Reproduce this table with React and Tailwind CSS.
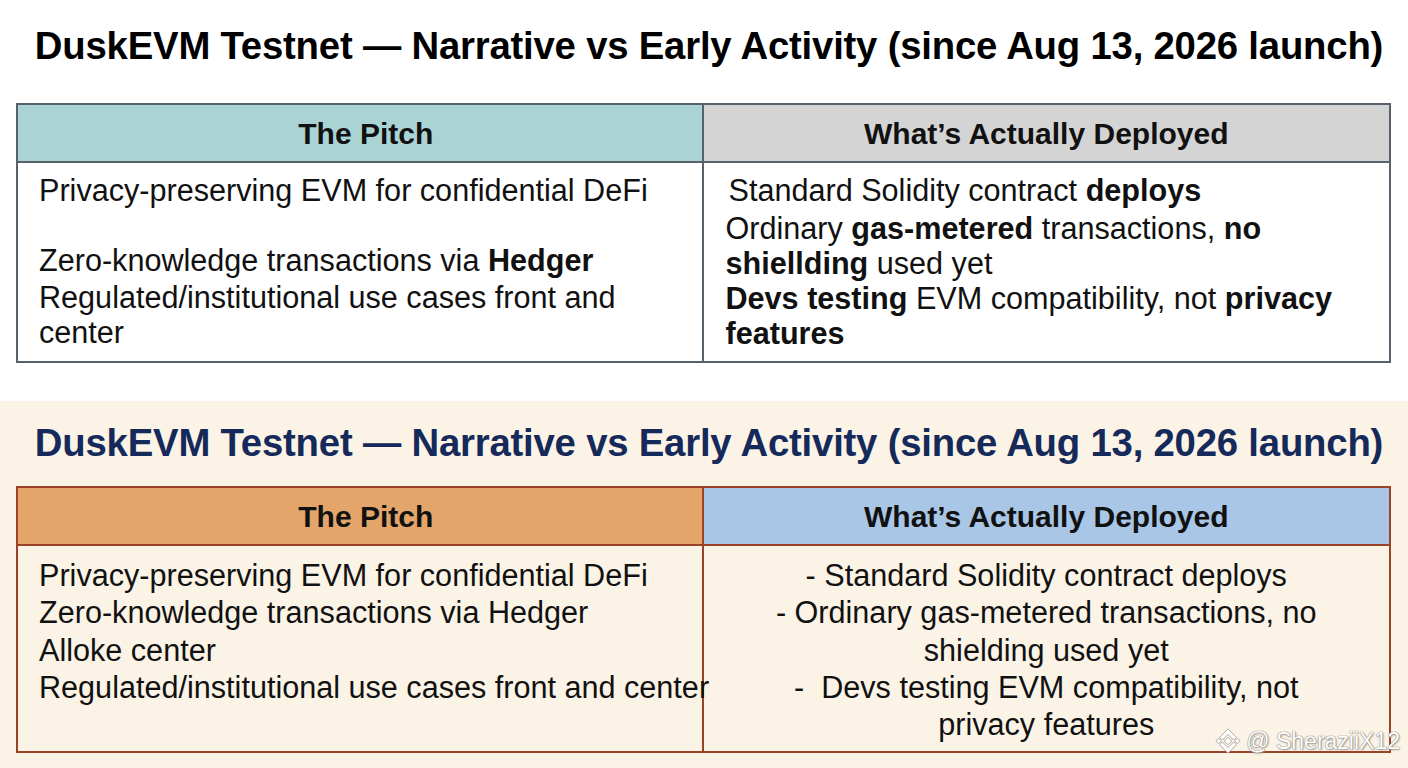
import React from "react";

// colours picked from the two comparison panels
const font = { fontFamily: '"Liberation Sans", Arial, sans-serif' };

function BinanceMark() {
  return (
    <svg viewBox="0 0 32 32" className="w-[30px] h-[30px]">
      <g fill="#ffffff" stroke="#a9a39b" strokeWidth="1" strokeLinejoin="round">
        <polygon points="16,3 25,12 22,15 16,9 10,15 7,12" />
        <polygon points="16,29 25,20 22,17 16,23 10,17 7,20" />
        <polygon points="3,16 6,13 9,16 6,19" />
        <polygon points="23,16 26,13 29,16 26,19" />
        <polygon points="16,12 20,16 16,20 12,16" />
      </g>
    </svg>
  );
}

function Watermark() {
  return (
    <div className="absolute right-[8px] bottom-[12px] flex items-center gap-[3px]">
      <BinanceMark />
      <span
        className="text-[23px] text-white leading-none"
        style={{ textShadow: "0 0 1px #7d7872, 0 0 1px #7d7872, 1px 1px 2px #a49e96" }}
      >
        @ SheraziiX12
      </span>
    </div>
  );
}

export default function App() {
  return (
    <div className="relative w-[1408px] h-[768px] bg-white overflow-hidden text-[#111]" style={font}>
      {/* Version 1 - plain */}
      <section className="h-[401px] px-[16px] pt-[24px]">
        <h1 className="text-center text-[38.3px] leading-[44px] font-bold tracking-[-0.2px] text-black pl-[10px]">
          DuskEVM Testnet — Narrative vs Early Activity (since Aug 13, 2026 launch)
        </h1>
        <div className="mt-[35px] w-[1375px] border-2 border-[#56616c]">
          <div className="grid grid-cols-2 border-b-2 border-[#56616c]">
            <div className="h-[56px] flex items-center justify-center pl-[12px] bg-[#aad3d3] border-r-2 border-[#56616c] text-[30px] font-bold">
              The Pitch
            </div>
            <div className="h-[56px] flex items-center justify-center bg-[#d4d4d4] text-[30px] font-bold">
              What’s Actually Deployed
            </div>
          </div>
          <div className="grid grid-cols-2 text-[30.6px] leading-[35px]">
            <div className="pl-[21px] pt-[10px] pb-[10px] border-r-2 border-[#56616c] whitespace-nowrap">
              <p>Privacy-preserving EVM for confidential DeFi</p>
              <p className="mt-[35px]">
                Zero-knowledge transactions via <b>Hedger</b>
              </p>
              <p className="mt-[2px]">
                Regulated/institutional use cases front and
                <br />
                center
              </p>
            </div>
            <div className="pl-[22px] pt-[10px] pb-[10px] whitespace-nowrap">
              <p className="pl-[3px]">
                Standard Solidity contract <b>deploys</b>
              </p>
              <p className="mt-[3px]">
                Ordinary <b>gas-metered</b> transactions, <b>no</b>
                <br />
                <b>shiellding</b> used yet
              </p>
              <p>
                <b>Devs testing</b> EVM compatibility, not <b>privacy</b>
                <br />
                <b>features</b>
              </p>
            </div>
          </div>
        </div>
      </section>

      {/* Version 2 - warm */}
      <section className="h-[367px] bg-[#faf3e6] px-[16px] pt-[20px]">
        <h2 className="text-center text-[38.3px] leading-[44px] font-bold tracking-[-0.2px] text-[#15295a] pl-[10px]">
          DuskEVM Testnet — Narrative vs Early Activity (since Aug 13, 2026 launch)
        </h2>
        <div className="mt-[21px] w-[1375px] border-2 border-[#9a4328]">
          <div className="grid grid-cols-2 border-b-2 border-[#9a4328]">
            <div className="h-[56px] flex items-center justify-center pl-[12px] bg-[#e3a56a] border-r-2 border-[#9a4328] text-[30px] font-bold">
              The Pitch
            </div>
            <div className="h-[56px] flex items-center justify-center bg-[#a9c6e7] text-[30px] font-bold">
              What’s Actually Deployed
            </div>
          </div>
          <div className="grid grid-cols-2 text-[30.6px] leading-[37.3px]">
            <div className="relative z-10 pl-[21px] pt-[11px] pb-[8px] border-r-2 border-[#9a4328] whitespace-nowrap">
              <p>Privacy-preserving EVM for confidential DeFi</p>
              <p>Zero-knowledge transactions via Hedger</p>
              <p>Alloke center</p>
              <p>Regulated/institutional use cases front and center</p>
            </div>
            <div className="pt-[11px] pb-[8px] text-center whitespace-nowrap">
              <p>- Standard Solidity contract deploys</p>
              <p>
                - Ordinary gas-metered transactions, no
                <br />
                shielding used yet
              </p>
              <p>
                -&nbsp; Devs testing EVM compatibility, not
                <br />
                privacy features
              </p>
            </div>
          </div>
        </div>
      </section>

      <Watermark />
    </div>
  );
}
